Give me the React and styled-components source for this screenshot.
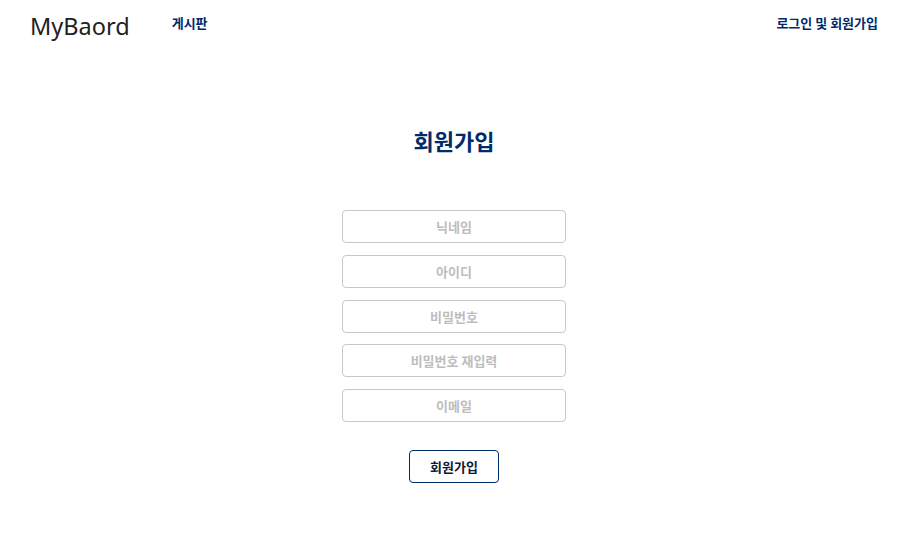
import React from "react";
import styled, { createGlobalStyle } from "styled-components";

const Global = createGlobalStyle`
  * { box-sizing: border-box; }
  body {
    margin: 0;
    background: #fff;
    font-family: "Noto Sans", "Noto Sans CJK KR", sans-serif;
  }
`;

const NAVY = "#002b6b";

const Header = styled.header`
  display: flex;
  align-items: flex-start;
  height: 54px;
  padding: 0 46px 0 30px;
`;

const Logo = styled.div`
  font-family: "Noto Sans", sans-serif;
  font-size: 23.5px;
  line-height: 32px;
  color: #222;
  margin-right: 42px;
  margin-top: 10px;
`;

const NavLink = styled.a`
  font-family: "Noto Sans CJK KR", sans-serif;
  font-size: 13px;
  line-height: 18px;
  font-weight: 700;
  color: ${NAVY};
  text-decoration: none;
  margin-top: 14px;
  margin-left: ${(p) => (p.$right ? "auto" : "0")};
`;

const Main = styled.main`
  display: flex;
  flex-direction: column;
  align-items: center;
  padding: 70px 16px 0 0;
`;

const Title = styled.h1`
  margin: 0 0 54px;
  font-family: "Noto Sans CJK KR", sans-serif;
  font-size: 22px;
  font-weight: 700;
  color: ${NAVY};
`;

const Form = styled.form`
  display: flex;
  flex-direction: column;
  align-items: center;
  gap: 11.75px;
`;

const Input = styled.input`
  width: 224px;
  height: 33px;
  border: 1px solid #c8c8c8;
  border-radius: 4px;
  text-align: center;
  font-family: "Noto Sans CJK KR", sans-serif;
  font-size: 13px;
  font-weight: 700;
  outline: none;
  &::placeholder {
    color: #bdbdbd;
  }
`;

const Button = styled.button`
  margin-top: 16px;
  width: 90px;
  height: 33px;
  background: #fff;
  border: 1px solid ${NAVY};
  border-radius: 4px;
  font-family: "Noto Sans CJK KR", sans-serif;
  font-size: 13px;
  font-weight: 700;
  color: #111a33;
  cursor: pointer;
`;

export default function App() {
  const fields = [
    { type: "text", ph: "닉네임" },
    { type: "text", ph: "아이디" },
    { type: "password", ph: "비밀번호" },
    { type: "password", ph: "비밀번호 재입력" },
    { type: "email", ph: "이메일" },
  ];
  return (
    <>
      <Global />
      <Header>
        <Logo>MyBaord</Logo>
        <NavLink href="#">게시판</NavLink>
        <NavLink href="#" $right>
          로그인 및 회원가입
        </NavLink>
      </Header>
      <Main>
        <Title>회원가입</Title>
        <Form onSubmit={(e) => e.preventDefault()}>
          {fields.map((f) => (
            <Input key={f.ph} type={f.type} placeholder={f.ph} />
          ))}
          <Button type="submit">회원가입</Button>
        </Form>
      </Main>
    </>
  );
}
